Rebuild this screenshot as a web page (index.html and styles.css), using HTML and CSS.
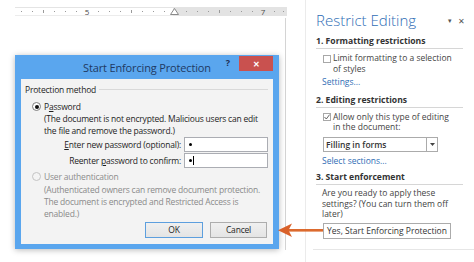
FILE: index.html
```html
<!DOCTYPE html>
<html>
<head>
<meta charset="utf-8">
<link rel="stylesheet" href="styles.css">
</head>
<body>
<div class="screen">
  <div class="doc">
    <svg class="ruler" width="272" height="12" viewBox="0 0 272 12">
      <rect x="0" y="2" width="158" height="9" fill="#ffffff"/>
      <rect x="0" y="2" width="158" height="1" fill="#e4e4e4"/>
      <rect x="0" y="10" width="158" height="1" fill="#ececec"/>
      <rect x="158" y="2" width="114" height="9" fill="#e3e3e3"/>
      <g fill="#9a9a9a">
        <rect x="6" y="6" width="1" height="1"/><rect x="17" y="6" width="1" height="1"/>
        <rect x="28" y="5" width="1" height="3"/><rect x="39" y="6" width="1" height="1"/>
        <rect x="50" y="6" width="1" height="1"/><rect x="61" y="6" width="1" height="1"/>
        <rect x="83" y="6" width="1" height="1"/><rect x="94" y="6" width="1" height="1"/>
        <rect x="105" y="6" width="1" height="1"/><rect x="116" y="5" width="1" height="3"/>
        <rect x="127" y="6" width="1" height="1"/><rect x="138" y="6" width="1" height="1"/>
        <rect x="149" y="6" width="1" height="1"/><rect x="171" y="6" width="1" height="1"/>
        <rect x="182" y="6" width="1" height="1"/><rect x="193" y="6" width="1" height="1"/>
        <rect x="204" y="5" width="1" height="3"/><rect x="215" y="6" width="1" height="1"/>
        <rect x="226" y="6" width="1" height="1"/><rect x="237" y="6" width="1" height="1"/>
        <rect x="259" y="6" width="1" height="1"/><rect x="268" y="6" width="1" height="1"/>
      </g>
      <text x="72" y="10" class="ruler-num" text-anchor="middle">5</text>
      <text x="248" y="10" class="ruler-num" text-anchor="middle">7</text>
      <polygon points="159.5,3.5 155.5,9.5 163.5,9.5" fill="#ffffff" stroke="#8a8a8a" stroke-width="1"/>
    </svg>
    <div class="page">
      <div class="dialog">
        <div class="dlg-title">
          <span></span>
          <span class="dlg-caption">Start Enforcing Protection</span>
          <span class="dlg-ctrls"><span class="help">?</span><span class="close">✕</span></span>
        </div>
        <div class="dlg-body">
          <div class="group-head"><span>Protection method</span><span class="rule"></span></div>
          <div class="radio-row"><span class="radio on"></span><span>P<u>a</u>ssword</span></div>
          <p class="desc">(The document is not encrypted. Malicious users can edit<br>the file and remove the password.)</p>
          <div class="fields">
            <div class="field"><span class="flabel"><u>E</u>nter new password (optional):</span><span class="input"><span class="dot"></span></span></div>
            <div class="field"><span class="flabel">Reenter <u>p</u>assword to confirm:</span><span class="input"><span class="dot"></span><span class="caret"></span></span></div>
          </div>
          <div class="radio-row off"><span class="radio"></span><span>User authentication</span></div>
          <p class="desc off">(Authenticated owners can remove document protection.<br>The document is encrypted and Restricted Access is<br>enabled.)</p>
          <div class="buttons"><span class="btn default">OK</span><span class="btn">Cancel</span></div>
        </div>
      </div>
    </div>
  </div>
  <aside class="panel">
    <div class="pane-head"><span class="pane-title">Restrict Editing</span><span class="pane-ctrl"><span class="pin">▾</span><span class="px">✕</span></span></div>
    <h3 class="sec">1. Formatting restrictions</h3>
    <div class="opt"><span class="cb"></span><span>Limit formatting to a selection<br>of styles</span></div>
    <div class="link">Settings...</div>
    <h3 class="sec s2">2. Editing restrictions</h3>
    <div class="opt"><span class="cb"><svg width="6" height="6" viewBox="0 0 6 6"><polyline points="0.5,3 2.3,5 5.6,0.6" fill="none" stroke="#555" stroke-width="0.9"/></svg></span><span>Allow only this type of editing<br>in the document:</span></div>
    <div class="select"><span class="sel-text">Filling in forms</span><span class="sel-arrow"><svg width="5" height="3" viewBox="0 0 5 3"><polygon points="0,0 5,0 2.5,3" fill="#444"/></svg></span></div>
    <div class="link l2">Select sections...</div>
    <h3 class="sec s3">3. Start enforcement</h3>
    <p class="note">Are you ready to apply these<br>settings? (You can turn them off<br>later)</p>
    <div class="yes">Yes, Start Enforcing Protection</div>
    <div class="pane-foot"></div>
  </aside>
  <svg class="arrow" width="46" height="16" viewBox="277 222 46 16">
    <rect x="287" y="229" width="36" height="2.6" fill="#dc6a2e"/>
    <path d="M278 230.3 L292 223.5 L288.5 230.3 L292 237 Z" fill="#d9612a"/>
  </svg>
</div>
</body>
</html>
```
FILE: styles.css
```css
html, body {
  margin: 0;
  padding: 0;
  background: #ffffff;
}
body {
  font-family: "Open Sans", "Noto Sans", sans-serif;
  width: 474px;
  height: 262px;
  overflow: hidden;
}
.screen {
  position: relative;
  display: flex;
  width: 474px;
  height: 262px;
}
.doc {
  width: 305px;
  flex: none;
}
.ruler {
  display: block;
  margin: 5px 0 0 15px;
}
.ruler-num {
  font-family: "Open Sans", sans-serif;
  font-size: 8px;
  fill: #4a4a4a;
}
.page {
  box-sizing: border-box;
  margin-top: 1px;
  width: 286px;
  height: 232px;
  border-right: 1px solid #d4d4d4;
  padding: 37px 0 0 15px;
}
.dialog {
  width: 264px;
  box-sizing: border-box;
  background: #5aa6ee;
  padding: 0 6px 5px;
  box-shadow: 0 1px 6px rgba(0, 0, 0, 0.28);
}
.dlg-title {
  height: 24px;
  margin: 0 -6px;
  display: grid;
  grid-template-columns: 1fr auto 1fr;
  align-items: start;
}
.dlg-caption {
  font-size: 11px;
  line-height: 26px;
  color: #1f3a63;
  letter-spacing: -0.15px;
}
.dlg-ctrls {
  display: flex;
  justify-content: flex-end;
  align-items: flex-start;
  padding-right: 6px;
}
.help {
  font-size: 9px;
  font-weight: 700;
  color: #1c2f55;
  line-height: 14px;
  margin-top: 1px;
  margin-right: 9px;
}
.close {
  width: 34px;
  height: 15px;
  margin-top: 1px;
  background: #c9514f;
  color: #ffffff;
  font-size: 8px;
  font-weight: 700;
  line-height: 15px;
  text-align: center;
}
.dlg-body {
  background: #f3f3f3;
  height: 165px;
  box-sizing: border-box;
  padding: 0 5px 0 4px;
  font-size: 8.5px;
  letter-spacing: -0.2px;
  color: #1e1e1e;
  white-space: nowrap;
}
.group-head {
  display: flex;
  align-items: center;
  height: 21px;
}
.rule {
  flex: 1;
  height: 1px;
  background: #d9d9d9;
  margin-left: 3px;
}
.radio-row {
  display: flex;
  align-items: center;
  height: 13px;
  padding-left: 7px;
}
.radio {
  box-sizing: border-box;
  width: 9px;
  height: 9px;
  border-radius: 50%;
  border: 1px solid #7e7e7e;
  background: #ffffff;
  margin-right: 3px;
  position: relative;
}
.radio.on::after {
  content: "";
  position: absolute;
  left: 1.5px;
  top: 1.5px;
  width: 4px;
  height: 4px;
  border-radius: 50%;
  background: #111111;
}
.radio-row.off {
  height: 16px;
  color: #8d8d8d;
}
.radio-row.off .radio {
  border-color: #c4c4c4;
  background: #f4f4f4;
}
.desc {
  margin: 0;
  padding-left: 19px;
  line-height: 12px;
}
.desc.off {
  color: #8a8a8a;
}
.fields {
  display: flex;
  flex-direction: column;
  gap: 1px;
  margin-top: 0;
}
.field {
  display: flex;
  justify-content: flex-end;
  align-items: center;
  height: 15px;
}
.flabel {
  margin-right: 3px;
}
.input {
  box-sizing: border-box;
  width: 84px;
  height: 15px;
  border: 1px solid #abadb3;
  background: #ffffff;
  padding-left: 4px;
  display: flex;
  align-items: center;
}
.dot {
  width: 3px;
  height: 3px;
  border-radius: 50%;
  background: #000000;
}
.caret {
  display: inline-block;
  width: 1px;
  height: 9px;
  background: #000000;
  margin-left: 1px;
}
.buttons {
  display: flex;
  justify-content: flex-end;
  gap: 7px;
  margin-top: 2px;
  padding-right: 1px;
}
.btn {
  box-sizing: border-box;
  width: 57px;
  height: 16px;
  border: 1px solid #adadad;
  background: linear-gradient(#f0f0f0, #e4e4e4);
  text-align: center;
  line-height: 14px;
}
.btn.default {
  width: 58px;
  border-color: #5d9fde;
}
.panel {
  width: 169px;
  flex: none;
  box-sizing: border-box;
  border-left: 1px solid #ebebeb;
  padding: 0 11px 0 10px;
  font-size: 8.5px;
  color: #444444;
  position: relative;
}
.pane-head {
  display: flex;
  justify-content: space-between;
  align-items: center;
  height: 22px;
  margin-top: 9px;
}
.pane-title {
  font-size: 15px;
  font-weight: 300;
  color: #2f6db5;
}
.pane-ctrl {
  display: flex;
  align-items: center;
  gap: 6px;
  color: #555555;
  margin-right: -2px;
}
.pin {
  font-size: 7px;
}
.px {
  font-size: 8px;
}
.sec {
  margin: 0;
  padding-top: 4px;
  font-size: 8.6px;
  font-weight: 700;
  line-height: 13px;
  color: #333333;
  border-bottom: 1px solid #d6d6d6;
}
.sec.s2 {
  padding-top: 7px;
}
.sec.s3 {
  padding-top: 5px;
}
.opt {
  display: flex;
  align-items: flex-start;
  margin-top: 4px;
  padding-left: 7px;
  line-height: 10.8px;
}
.cb {
  box-sizing: border-box;
  flex: none;
  width: 8px;
  height: 8px;
  border: 1px solid #a8a8a8;
  background: #ffffff;
  margin-top: 1.5px;
  margin-right: 2px;
  display: flex;
  align-items: center;
  justify-content: center;
}
.link {
  color: #2f6db5;
  line-height: 11px;
  margin-top: 1px;
  padding-left: 6px;
}
.link.l2 {
  margin-top: 3px;
}
.select {
  box-sizing: border-box;
  display: flex;
  width: 115px;
  height: 15px;
  margin: 4px 0 0 7px;
  border: 1px solid #ababab;
  background: #ffffff;
}
.sel-text {
  flex: 1;
  padding-left: 2px;
  font-weight: 600;
  color: #333333;
  line-height: 13px;
}
.sel-arrow {
  width: 10px;
  border-left: 1px solid #ababab;
  display: flex;
  align-items: center;
  justify-content: center;
}
.note {
  margin: 3px 0 0;
  padding-left: 6px;
  line-height: 10.6px;
}
.yes {
  box-sizing: border-box;
  width: 128px;
  height: 16px;
  margin: 3px 0 0 7px;
  border: 1px solid #ababab;
  background: #ffffff;
  text-align: center;
  line-height: 14px;
  color: #333333;
}
.pane-foot {
  margin: 10px -11px 0 -3px;
  height: 1px;
  background: #e6e6e6;
}
.arrow {
  position: absolute;
  left: 277px;
  top: 222px;
}
```
